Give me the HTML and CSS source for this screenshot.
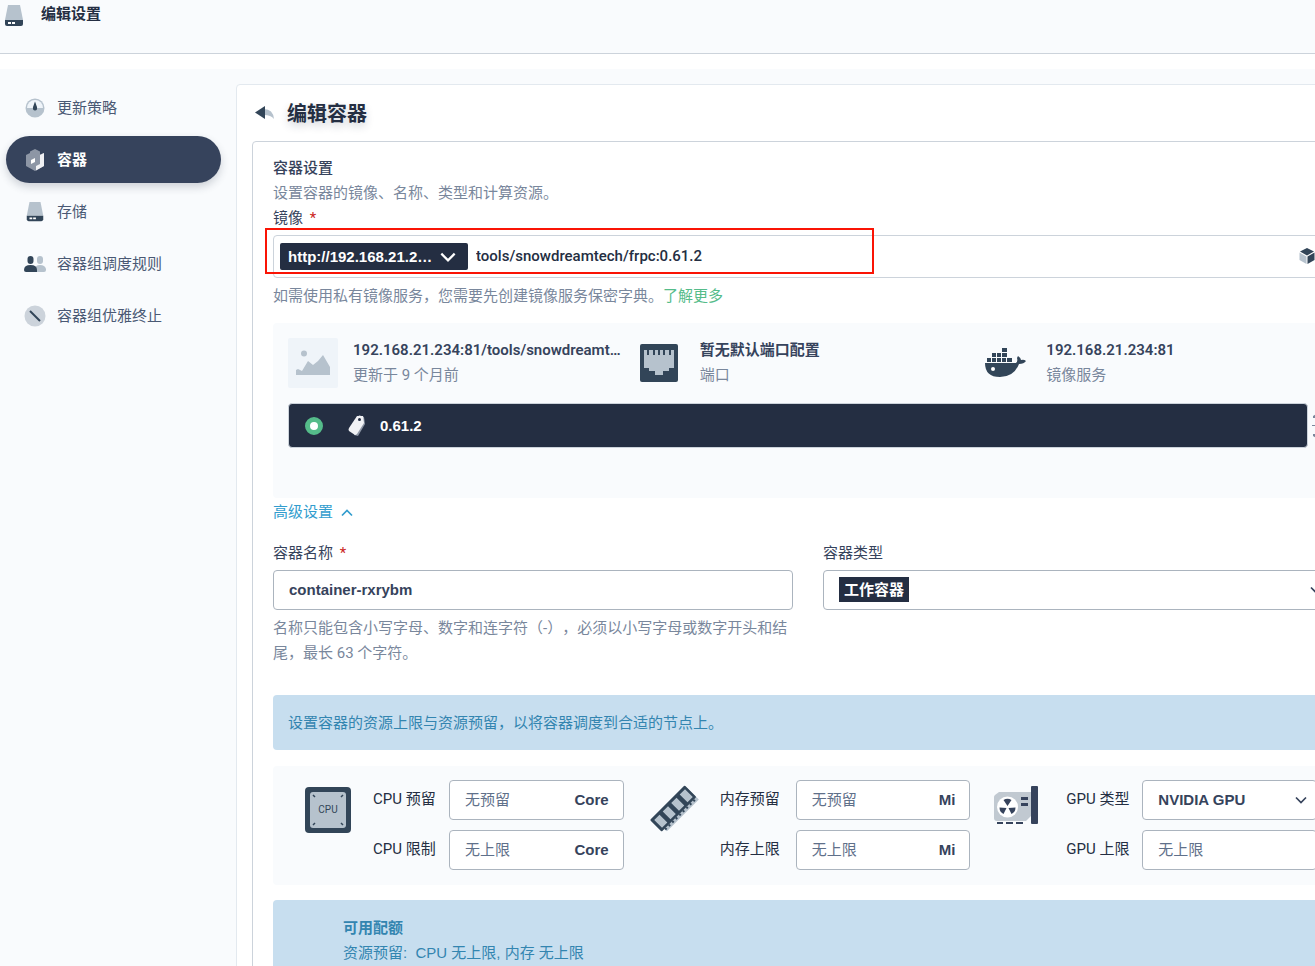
FILE: index.html
```html
<!DOCTYPE html>
<html lang="zh-CN">
<head>
<meta charset="utf-8">
<title>编辑设置</title>
<link rel="stylesheet" href="styles.css">
</head>
<body>
<svg class="defs" aria-hidden="true">
  <symbol id="disk" viewBox="0 0 20 24"><path fill="#b6c2cd" d="M4 1h12l3 15H1z"/><path fill="#324558" d="M1 16h18v4q0 2-2 2H3q-2 0-2-2z"/><path fill="#fff" d="M4 18h3v2H4zm4 0h3v2H8z"/></symbol>
  <symbol id="chevron" viewBox="0 0 12 12"><path d="M1 3.500 6 8.500 11 3.500" fill="none" stroke="currentColor" stroke-width="1.700"/></symbol>
</svg>
<header class="topbar">
  <svg class="topbar-icon"><use href="#disk"/></svg>
  <h1>编辑设置</h1>
</header>
<div class="page">
  <nav class="sidebar">
    <a href="#"><svg viewBox="0 0 22 22"><circle cx="11" cy="11" r="9.500" fill="#b6c2cd"/><path d="M3 11a8 8 0 0 1 16 0z" fill="#eff4f9"/><path d="M11 4.500 13 10q.5 3.500-2 3.500T9 10z" fill="#324558"/></svg>更新策略</a>
    <a href="#" class="active"><svg viewBox="0 0 22 22"><path d="m11 0 5 2.500v3L20 4v13l-9 5-9-5V6l4-2V2.500z" fill="#8d96a5"/><path d="M20 4v13l-8 4.500V17l4-2V6z" fill="#f0f1f4"/><path d="m7 11 4-2v4l-4 2z" fill="#fff"/></svg>容器</a>
    <a href="#"><svg viewBox="0 0 20 24"><use href="#disk"/></svg>存储</a>
    <a href="#"><svg viewBox="0 0 22 22"><rect x="13" y="3" width="6" height="8" rx="3" fill="#b6c2cd"/><path d="M11 19v-3q0-4 5-4t6 4v1q0 2-2 2z" fill="#b6c2cd"/><rect x="3.500" y="3" width="6" height="8" rx="3" fill="#324558"/><path d="M2 19q-2 0-2-2 0-5 6.500-5t6.500 5v2z" fill="#324558"/></svg>容器组调度规则</a>
    <a href="#"><svg viewBox="0 0 22 22"><circle cx="11" cy="11" r="10.500" fill="#ccd3db"/><path d="m6 6 10 10" stroke="#324558" stroke-width="2"/></svg>容器组优雅终止</a>
  </nav>
  <main class="panel">
    <div class="panel-head">
      <button class="back" aria-label="返回"><svg viewBox="0 0 20 16"><path d="M9 4q9 0 10 10-3-4-10-4z" fill="#b6c2cd"/><path d="M0 7.500 10 1v13z" fill="#324558"/></svg></button>
      <h2>编辑容器</h2>
    </div>
    <form class="card">
      <h3>容器设置</h3>
      <p class="muted">设置容器的镜像、名称、类型和计算资源。</p>
      <label for="image">镜像 <span class="star">*</span></label>
      <div class="image-field">
        <button type="button" class="registry">http://192.168.21.2…<svg class="chev"><use href="#chevron"/></svg></button>
        <input id="image" value="tools/snowdreamtech/frpc:0.61.2">
        <svg class="cube" viewBox="0 0 16 18"><path d="m8 0 7 3.500-7 4-7-4z" fill="#324558"/><path d="m.5 4.500 7 4V16l-7-4z" fill="#b6c2cd"/><path d="m15.500 4.500-7 4V16l7-4z" fill="#324558"/></svg>
        <span class="highlight"></span>
      </div>
      <p class="muted hint">如需使用私有镜像服务，您需要先创建镜像服务保密字典。<a href="#">了解更多</a></p>

      <section class="image-info">
        <div class="thirds">
          <div class="info">
            <svg viewBox="0 0 50 50"><rect width="50" height="50" rx="2" fill="#eff4f9"/><circle cx="16" cy="15.500" r="3" fill="#b6c2cd"/><path d="M8 37v-5l2-1 4 2 6-10 5 4 5-4 5-6 7 12v8z" fill="#b6c2cd"/></svg>
            <div><strong>192.168.21.234:81/tools/snowdreamt…</strong><p class="muted">更新于 9 个月前</p></div>
          </div>
          <div class="info">
            <svg viewBox="0 0 50 50"><rect x="5" y="6" width="38" height="38" rx="2" fill="#324558"/><path d="M9 12h3v5h2v-5h4v5h2v-5h3v5h2v-5h3v5h2v-5h4v5h2v-5h3v18h-5v3h-6v4h-8v-4h-6v-3H9z" fill="#b6c2cd"/></svg>
            <div><strong>暂无默认端口配置</strong><p class="muted">端口</p></div>
          </div>
          <div class="info">
            <svg viewBox="0 0 50 50"><path d="M4 25h31q2-2 1-5l1-2q3 2 3 4 3-1 5 1-2 3-7 3-5 13-19 13Q4 39 4 25z" fill="#324558"/><path d="M6 20h4v4H6zm5 0h4v4h-4zm5 0h4v4h-4zm5 0h4v4h-4zm5 0h5v4h-5zM11 15h4v4h-4zm5 0h4v4h-4zm5 0h5v4h-5zm0-5h5v4h-5z" fill="#324558"/><circle cx="12" cy="31" r="2" fill="#fff"/></svg>
            <div><strong>192.168.21.234:81</strong><p class="muted">镜像服务</p></div>
          </div>
        </div>
        <div class="tag-line">
          <label class="tag-row">
            <input type="radio" name="tag" checked>
            <svg viewBox="0 0 22 24"><path d="m13 1 5 2 1 7-7 12-4-1z" fill="#8d96a5"/><path d="m11 2 6 0 1 7-7 11q-1 1-2 1l-6-4q-1-1 0-3z" fill="#f0f1f4"/><circle cx="13.500" cy="5.500" r="1.500" fill="#242e42"/></svg>
            0.61.2
          </label>
          <svg class="resize" viewBox="0 0 16 30"><path d="M0 14.500h16" stroke="#79879c"/><path d="M1 7V5l7-4 6 4v2zM1 23v2l7 4 6-4v-2z" fill="#79879c"/></svg>
        </div>
      </section>

      <button type="button" class="advanced">高级设置<svg class="chev up"><use href="#chevron"/></svg></button>

      <div class="halves">
        <div>
          <label for="name">容器名称 <span class="star">*</span></label>
          <input id="name" class="control" value="container-rxrybm">
          <p class="muted help">名称只能包含小写字母、数字和连字符（-），必须以小写字母或数字开头和结尾，最长 63 个字符。</p>
        </div>
        <div>
          <label for="type">容器类型</label>
          <div class="select-box type-box">
            <select id="type" class="control type"><option>工作容器</option></select>
            <svg class="chev"><use href="#chevron"/></svg>
          </div>
        </div>
      </div>

      <p class="notice">设置容器的资源上限与资源预留，以将容器调度到合适的节点上。</p>

      <section class="resources thirds">
        <div class="resource">
          <svg viewBox="0 0 48 48"><rect x="1" y="1" width="46" height="46" rx="4" fill="#324558"/><rect x="6" y="6" width="36" height="36" rx="3" fill="#b6c2cd"/><path d="m9 9 2 2m28-2-2 2M9 39l2-2m28 2-2-2" stroke="#324558" stroke-width="1.500"/><text x="24" y="27" text-anchor="middle">CPU</text></svg>
          <div class="fields">
            <label for="cpu-r">CPU 预留</label><div class="unit-box"><input id="cpu-r" class="control" placeholder="无预留"><span>Core</span></div>
            <label for="cpu-l">CPU 限制</label><div class="unit-box"><input id="cpu-l" class="control" placeholder="无上限"><span>Core</span></div>
          </div>
        </div>
        <div class="resource">
          <svg viewBox="0 0 48 48"><g transform="translate(-1 34) rotate(-45)"><path d="M2 3h47v17H4z" fill="#b6c2cd"/><path d="M4 17.500h42" stroke="#324558" stroke-width="2" stroke-dasharray="2 3"/><rect width="49" height="16.500" rx="1" fill="#324558"/><path d="M3 3h7.500v11H3zm12 0h7.500v11H15zm12 0h7.500v11H27zm12 0h7.500v11H39z" fill="#b6c2cd"/></g></svg>
          <div class="fields">
            <label for="mem-r">内存预留</label><div class="unit-box"><input id="mem-r" class="control" placeholder="无预留"><span>Mi</span></div>
            <label for="mem-l">内存上限</label><div class="unit-box"><input id="mem-l" class="control" placeholder="无上限"><span>Mi</span></div>
          </div>
        </div>
        <div class="resource">
          <svg viewBox="4 0 48 48"><path d="M1 11q0-1 1-2l4-3h33v23l-6 6H4q-3 0-3-3z" fill="#c1c9d1"/><circle cx="14.500" cy="21" r="10.500" fill="#fff"/><path d="m14.500 20-4-6q4-2.500 8 0zm-1 2-3 6q-4-2-4-6.500zm2 0 3 6q4-2 4-6.500z" fill="#36435c"/><path d="M28 11h7v3h-7zm0 6h7v3h-7zM4 36h6v2H4zm9 0h7v2h-7zm10 0h7v2h-7z" fill="#36435c"/><rect x="38" width="7" height="38" rx="1" fill="#36435c"/></svg>
          <div class="fields">
            <label for="gpu-t">GPU 类型</label>
            <div class="select-box"><select id="gpu-t" class="control"><option>NVIDIA GPU</option></select><svg class="chev"><use href="#chevron"/></svg></div>
            <label for="gpu-l">GPU 上限</label><div class="unit-box"><input id="gpu-l" class="control" placeholder="无上限"></div>
          </div>
        </div>
      </section>

      <section class="notice quota">
        <strong>可用配额</strong>
        <p>资源预留:&nbsp; CPU 无上限, 内存 无上限</p>
      </section>
    </form>
  </main>
</div>
</body>
</html>
```
FILE: styles.css
```css
* { box-sizing: border-box; }
body {
  margin: 0;
  height: 100vh;
  overflow: hidden;
  background: #fff;
  color: #36435c;
  font: 15px/25px Roboto, "Noto Sans CJK SC", sans-serif;
  text-spacing-trim: space-all;
}
h1, h2, h3, p { margin: 0; }
a { text-decoration: none; }
input, button, select { font: inherit; color: inherit; margin: 0; }
button { padding: 0; border: 0; background: none; }
label { display: block; }
strong { font-weight: 700; }
.defs { position: absolute; width: 0; height: 0; }

.topbar {
  display: flex;
  gap: 17px;
  height: 54px;
  padding: 2px 4px;
  background: #f9fbfd;
  border-bottom: 1px solid #ccd3db;
}
.topbar-icon { width: 20px; height: 24px; margin-top: 2px; }
.topbar h1 { color: #242e42; font-size: 15px; line-height: 24px; }

.page {
  display: grid;
  grid-template-columns: 215px 1fr;
  gap: 15px;
  width: calc(100% + 80px);
  min-height: 100vh;
  margin-top: 15px;
  padding: 15px 15px 15px 6px;
  background: #f9fbfd;
}
.sidebar { display: flex; flex-direction: column; gap: 5px; }
.sidebar a {
  display: flex;
  align-items: center;
  gap: 11px;
  height: 47px;
  padding: 1px 18px 0;
  border-radius: 24px;
  color: #4a5974;
}
.sidebar svg { width: 22px; height: 22px; }
.sidebar .active {
  background: #36435c;
  color: #fff;
  font-weight: 700;
  box-shadow: 0 4px 8px rgba(36, 46, 66, .2);
}

.panel { padding: 15px; border: 1px solid #e3e9ef; border-radius: 4px; background: #fff; }
.panel-head { display: flex; align-items: center; gap: 12px; height: 26px; margin-bottom: 15px; }
.back { display: flex; padding-left: 3px; }
.back svg { width: 20px; height: 16px; }
.panel-head h2 { padding-top: 2px; color: #242e42; font-size: 20px; line-height: 26px; text-shadow: 0 4px 8px rgba(36, 46, 66, .2); }

.card { padding: 14px 20px 20px; border: 1px solid #ccd3db; border-radius: 4px; }
.card h3 { font-size: 15px; line-height: 25px; font-weight: 500; }
.muted { color: #79879c; }
.star { margin-left: 3px; color: #ca2621; }

.image-field {
  position: relative;
  display: flex;
  align-items: center;
  height: 43px;
  margin-top: 4px;
  padding: 0 27px 0 6px;
  border: 1px solid #ccd3db;
  border-radius: 4px;
}
.registry {
  display: flex;
  align-items: center;
  justify-content: space-between;
  width: 188px;
  height: 27px;
  padding: 0 12px 0 8px;
  border-radius: 2px;
  background: #242e42;
  color: #fff;
  font-weight: 700;
}
.registry, .control, .unit-box span, .tag-row, .quota {
  font-family: "Liberation Sans", "Noto Sans CJK SC", sans-serif;
}
.registry .chev { width: 16px; height: 16px; }
.image-field input { flex: 1; padding: 0 8px; border: 0; background: none; color: #242e42; font-weight: 500; }
.cube { width: 16px; height: 18px; }
.highlight {
  position: absolute;
  top: -8px;
  left: -9px;
  width: 609px;
  height: 46px;
  border: 2px solid #fa1405;
  pointer-events: none;
}
.hint { margin-top: 6px; }
.hint a { color: #55bc8a; }

.thirds { display: grid; grid-template-columns: repeat(3, minmax(0, 1fr)); }
.image-info { margin-top: 14px; padding: 15px 15px 50px; border-radius: 4px; background: #f9fbfd; }
.info { display: flex; gap: 15px; }
.info svg { flex: none; width: 50px; height: 50px; }
.info strong { display: block; white-space: nowrap; font-weight: 600; }
.tag-line { display: flex; align-items: center; gap: 4px; margin-top: 15px; }
.tag-row {
  display: flex;
  flex: 1;
  align-items: center;
  height: 45px;
  padding: 0 16px;
  border: 1px solid #ccd3db;
  border-radius: 4px;
  background: #242e42;
  color: #fff;
  font-weight: 700;
}
.tag-row input { appearance: none; width: 18px; height: 18px; border: 5px solid #55bc8a; border-radius: 50%; background: #fff; }
.tag-row svg { width: 22px; height: 24px; margin: 0 12px 0 23px; }
.resize { width: 16px; height: 30px; }

.chev { width: 12px; height: 12px; }
.advanced { display: flex; align-items: center; gap: 8px; margin-top: 2px; color: #329dce; }
.up { transform: rotate(180deg); }

.halves { display: grid; grid-template-columns: 1fr 1fr; gap: 30px; margin-top: 16px; }
.control {
  display: block;
  width: 100%;
  height: 40px;
  padding: 0 15px 2px;
  border: 1px solid #abb4be;
  border-radius: 4px;
  background: #fff;
  font-weight: 700;
  appearance: none;
}
.control::placeholder { color: #5f708a; font-weight: 400; opacity: 1; }
.halves .control { margin-top: 4px; }
.help { margin-top: 6px; }
.select-box { position: relative; }
.select-box .control { padding-bottom: 0; }
.select-box .chev { position: absolute; top: 14px; right: 10px; pointer-events: none; }
.select-box.type-box .chev { right: 21px; }
.select-box .type { padding: 0 20px 2px; background: linear-gradient(#242e42, #242e42) 15px 6px / 70px 25px no-repeat #fff; color: #fff; }

.notice { margin-top: 29px; padding: 16px 15px 14px; border-radius: 4px; background: #c7deef; color: #3385b0; }
.resources { margin-top: 16px; padding: 14px 15px 15px; border-radius: 4px; background: #f9fbfd; }
.resource { display: grid; grid-template-columns: 80px 1fr; gap: 5px; padding-right: 11px; }
.resource > svg { width: 48px; height: 48px; margin: 6px 16px; overflow: visible; }
.resource text { font-size: 10px; fill: #324558; }
.fields { display: grid; grid-template-columns: 76px 1fr; row-gap: 10px; line-height: 38px; }
.fields label { color: #242e42; }
.unit-box { position: relative; }
.unit-box span { position: absolute; top: 1px; right: 15px; font-weight: 700; }
.quota { margin-top: 15px; padding: 15px 70px; }
```
